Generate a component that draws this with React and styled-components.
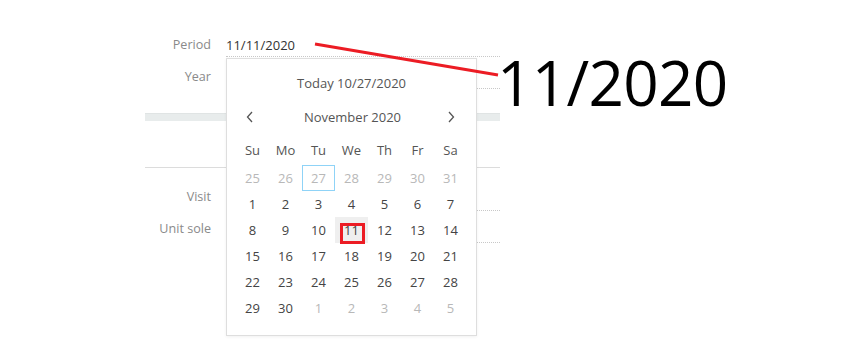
import React from "react";
import styled, { createGlobalStyle } from "styled-components";

const Global = createGlobalStyle`
  html, body { margin: 0; padding: 0; background: #fff; }
  body { font-family: "Open Sans", "Noto Sans", sans-serif; font-size: 13px; color: #444; }
`;

const Page = styled.div`
  position: relative;
  width: 862px;
  height: 360px;
  overflow: hidden;
  padding: 25px 0 0 145px;
  box-sizing: border-box;
`;

const Form = styled.div`
  width: 355px;
  display: flex;
  flex-direction: column;
`;

const Row = styled.div`
  display: grid;
  grid-template-columns: 66px 1fr;
  column-gap: 15px;
  height: ${(p) => p.$h || 32}px;
`;

const Label = styled.div`
  text-align: right;
  color: #8a8a8a;
  font-size: 12.6px;
  line-height: 22px;
  padding-top: ${(p) => p.$pt ?? 10}px;
`;

const Value = styled.div`
  border-bottom: 1px dotted #c8c8c8;
  line-height: 20px;
  padding-top: ${(p) => p.$pt ?? 10}px;
  color: #333;
  box-sizing: border-box;
`;

const Band = styled.div`
  height: 7px;
  background: #e8ecec;
  border-top: 1px solid #e0e4e4;
  margin-top: 24px;
`;

const Divider = styled.div`
  height: 0;
  border-top: 1px solid #dcdcdc;
  margin-top: 46px;
`;

const Popup = styled.div`
  position: absolute;
  left: 226px;
  top: 58px;
  width: 251px;
  height: 278px;
  box-sizing: border-box;
  background: #fff;
  border: 1px solid #dedede;
  box-shadow: 0 1px 3px rgba(0, 0, 0, 0.06);
  padding: 11px 9px 0;
  display: flex;
  flex-direction: column;
`;

const TodayRow = styled.div`
  height: 26px;
  line-height: 26px;
  text-align: center;
  color: #555;
`;

const NavRow = styled.div`
  margin-top: 8px;
  height: 26px;
  display: flex;
  align-items: center;
  justify-content: space-between;
  padding: 0 8px 0 10px;
  color: #555;
`;

const NavBtn = styled.span`
  display: flex;
  align-items: center;
  width: 12px;
  height: 26px;
`;

const MonthTitle = styled.span`
  color: #555;
`;

const Grid = styled.div`
  display: grid;
  grid-template-columns: repeat(7, 33px);
  grid-auto-rows: 26px;
  margin-top: ${(p) => p.$mt || 0}px;
`;

const Head = styled.div`
  text-align: center;
  line-height: 26px;
  color: #555;
`;

const Day = styled.div`
  position: relative;
  text-align: center;
  box-sizing: border-box;
  color: ${(p) => (p.$muted ? "#b8b8b8" : "#444")};
  background: ${(p) => (p.$selected ? "#efefef" : "transparent")};
  border: ${(p) => (p.$today ? "1px solid #8fd3f7" : "none")};
  line-height: ${(p) => (p.$today ? 24 : 26)}px;
`;

const Mark = styled.div`
  position: absolute;
  left: 5px;
  top: 6px;
  width: 25px;
  height: 21px;
  box-sizing: border-box;
  border: 3px solid #ec1c24;
`;

const Overlay = styled.svg`
  position: absolute;
  left: 0;
  top: 0;
  pointer-events: none;
`;

const BigText = styled.div`
  position: absolute;
  left: 497px;
  top: 40px;
  font-family: "Open Sans", "Noto Sans", sans-serif;
  font-size: 62px;
  line-height: 84px;
  letter-spacing: -0.7px;
  color: #000;
`;

const Chevron = ({ dir }) => (
  <svg width="8" height="12" viewBox="0 0 8 12">
    <path
      d={dir === "left" ? "M6 1 L1.5 6 L6 11" : "M2 1 L6.5 6 L2 11"}
      fill="none"
      stroke="#555"
      strokeWidth="1.3"
    />
  </svg>
);

const heads = ["Su", "Mo", "Tu", "We", "Th", "Fr", "Sa"];

function buildDays() {
  const d = [];
  [25, 26, 27, 28, 29, 30, 31].forEach((n) => d.push({ n, muted: true, today: n === 27 }));
  for (let i = 1; i <= 30; i++) d.push({ n: i, selected: i === 11 });
  [1, 2, 3, 4, 5].forEach((n) => d.push({ n, muted: true }));
  return d;
}

export default function App() {
  const days = buildDays();
  return (
    <>
      <Global />
      <Page>
        <Form>
          <Row>
            <Label $pt={9}>Period</Label>
            <Value>11/11/2020</Value>
          </Row>
          <Row>
            <Label $pt={9}>Year</Label>
            <Value $pt={10}></Value>
          </Row>
          <Band />
          <Divider />
          <Row $h={43}>
            <Label $pt={18}>Visit</Label>
            <Value $pt={18}></Value>
          </Row>
          <Row>
            <Label $pt={7}>Unit sole</Label>
            <Value $pt={7}></Value>
          </Row>
        </Form>

        <Popup>
          <TodayRow>Today 10/27/2020</TodayRow>
          <NavRow>
            <NavBtn>
              <Chevron dir="left" />
            </NavBtn>
            <MonthTitle>November 2020</MonthTitle>
            <NavBtn>
              <Chevron dir="right" />
            </NavBtn>
          </NavRow>
          <Grid $mt={7}>
            {heads.map((h) => (
              <Head key={h}>{h}</Head>
            ))}
          </Grid>
          <Grid $mt={2}>
            {days.map((d, i) => (
              <Day key={i} $muted={d.muted} $today={d.today} $selected={d.selected}>
                {d.n}
                {d.selected && <Mark />}
              </Day>
            ))}
          </Grid>
        </Popup>

        <Overlay width="862" height="360">
          <line x1="315" y1="44" x2="498" y2="75" stroke="#ec1c24" strokeWidth="3" />
        </Overlay>
        <BigText>11/2020</BigText>
      </Page>
    </>
  );
}
